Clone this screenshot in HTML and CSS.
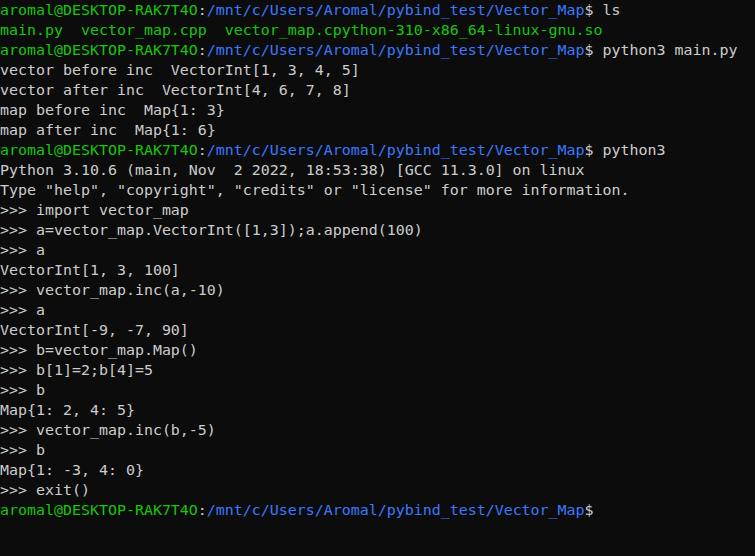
FILE: index.html
```html
<!DOCTYPE html>
<html>
<head>
<meta charset="utf-8">
<link rel="stylesheet" href="styles.css">
</head>
<body>
<div class="term">
<div class="line"><span class="u">aromal@DESKTOP-RAK7T4O</span>:<span class="p">/mnt/c/Users/Aromal/pybind_test/Vector_Map</span>$ ls</div>
<div class="line"><span class="f">main.py  vector_map.cpp  vector_map.cpython-310-x86_64-linux-gnu.so</span></div>
<div class="line"><span class="u">aromal@DESKTOP-RAK7T4O</span>:<span class="p">/mnt/c/Users/Aromal/pybind_test/Vector_Map</span>$ python3 main.py</div>
<div class="line">vector before inc  VectorInt[1, 3, 4, 5]</div>
<div class="line">vector after inc  VectorInt[4, 6, 7, 8]</div>
<div class="line">map before inc  Map{1: 3}</div>
<div class="line">map after inc  Map{1: 6}</div>
<div class="line"><span class="u">aromal@DESKTOP-RAK7T4O</span>:<span class="p">/mnt/c/Users/Aromal/pybind_test/Vector_Map</span>$ python3</div>
<div class="line">Python 3.10.6 (main, Nov  2 2022, 18:53:38) [GCC 11.3.0] on linux</div>
<div class="line">Type "help", "copyright", "credits" or "license" for more information.</div>
<div class="line">&gt;&gt;&gt; import vector_map</div>
<div class="line">&gt;&gt;&gt; a=vector_map.VectorInt([1,3]);a.append(100)</div>
<div class="line">&gt;&gt;&gt; a</div>
<div class="line">VectorInt[1, 3, 100]</div>
<div class="line">&gt;&gt;&gt; vector_map.inc(a,-10)</div>
<div class="line">&gt;&gt;&gt; a</div>
<div class="line">VectorInt[-9, -7, 90]</div>
<div class="line">&gt;&gt;&gt; b=vector_map.Map()</div>
<div class="line">&gt;&gt;&gt; b[1]=2;b[4]=5</div>
<div class="line">&gt;&gt;&gt; b</div>
<div class="line">Map{1: 2, 4: 5}</div>
<div class="line">&gt;&gt;&gt; vector_map.inc(b,-5)</div>
<div class="line">&gt;&gt;&gt; b</div>
<div class="line">Map{1: -3, 4: 0}</div>
<div class="line">&gt;&gt;&gt; exit()</div>
<div class="line"><span class="u">aromal@DESKTOP-RAK7T4O</span>:<span class="p">/mnt/c/Users/Aromal/pybind_test/Vector_Map</span>$</div>
</div>
</body>
</html>
```
FILE: styles.css
```css
html, body {
  margin: 0;
  padding: 0;
  background: #0c0c0c;
  width: 755px;
  height: 556px;
  overflow: hidden;
}
.term {
  font-family: "DejaVu Sans Mono", "Liberation Mono", monospace;
  font-size: 14.95px;
  line-height: 20px;
  color: #cccccc;
}
.line {
  white-space: pre;
  height: 20px;
}
.u { color: #16c60c; }
.f { color: #16c60c; }
.p { color: #3b78ff; }
```
